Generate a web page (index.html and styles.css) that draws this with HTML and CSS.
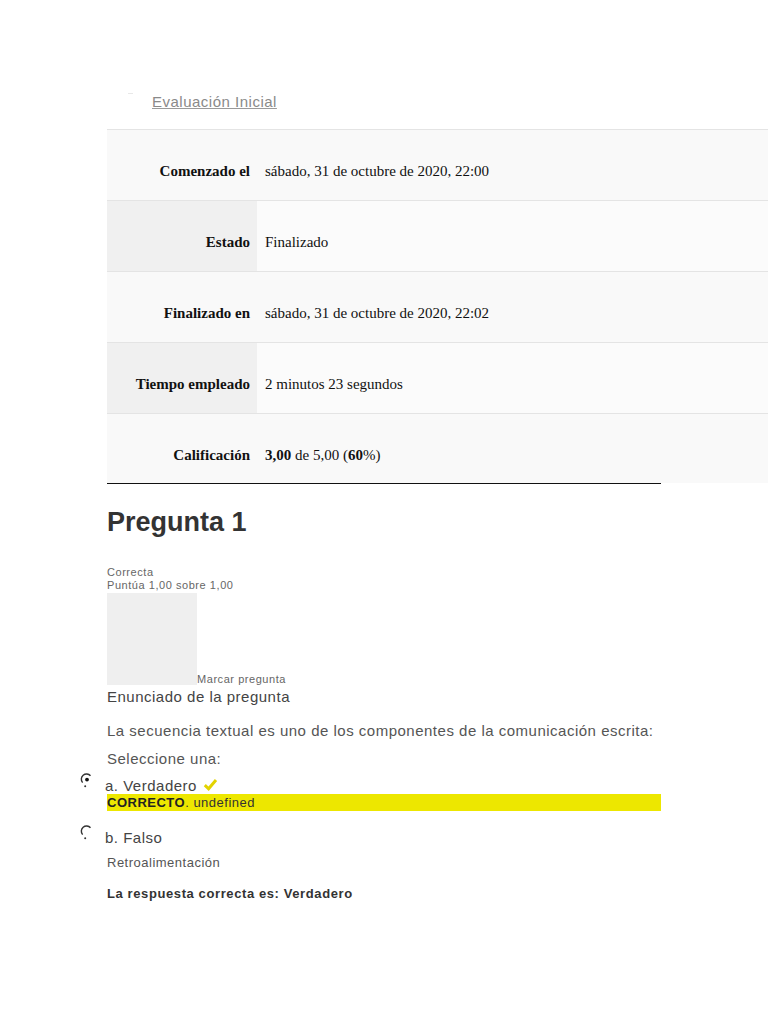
FILE: index.html
```html
<!DOCTYPE html>
<html lang="es">
<head>
<meta charset="utf-8">
<title>Evaluación Inicial</title>
<link rel="stylesheet" href="styles.css">
</head>
<body>
<div class="page">
  <div class="crumb"><span class="crumb-mark"></span><a class="crumb-link" href="#">Evaluación Inicial</a></div>

  <table class="summary">
    <tr class="odd"><th>Comenzado el</th><td>sábado, 31 de octubre de 2020, 22:00</td></tr>
    <tr class="even"><th>Estado</th><td>Finalizado</td></tr>
    <tr class="odd"><th>Finalizado en</th><td>sábado, 31 de octubre de 2020, 22:02</td></tr>
    <tr class="even"><th>Tiempo empleado</th><td>2 minutos 23 segundos</td></tr>
    <tr class="odd last"><th>Calificación</th><td><b>3,00</b> de 5,00 (<b>60</b>%)</td></tr>
  </table>
  <div class="rule"></div>

  <h2 class="qtitle">Pregunta 1</h2>
  <div class="qinfo">Correcta<br>Puntúa 1,00 sobre 1,00</div>
  <div class="flagrow"><div class="flagbox"></div><span class="flaglabel">Marcar pregunta</span></div>

  <div class="qhead">Enunciado de la pregunta</div>
  <div class="qtext">La secuencia textual es uno de los componentes de la comunicación escrita:</div>
  <div class="prompt">Seleccione una:</div>

  <div class="answer answer-a">
    <svg class="radio" width="14" height="16" viewBox="0 0 14 16" aria-hidden="true">
      <path d="M10.5 2.8 A5.2 5.2 0 1 0 2.6 9.6" fill="none" stroke="#333" stroke-width="1.4"/>
      <circle cx="5.2" cy="13.2" r="1" fill="#333"/>
      <circle cx="7" cy="6.6" r="1.9" fill="#111"/>
    </svg>
    <span class="alabel">a. Verdadero</span>
    <svg class="check" width="15" height="14" viewBox="0 0 15 14" aria-hidden="true">
      <path d="M1.8 7.2 L5.6 10.8 L13 2" fill="none" stroke="#e3d300" stroke-width="3"/>
    </svg>
  </div>
  <div class="feedback"><b>CORRECTO</b>. undefined</div>

  <div class="answer answer-b">
    <svg class="radio" width="14" height="16" viewBox="0 0 14 16" aria-hidden="true">
      <path d="M10.5 2.8 A5.2 5.2 0 1 0 2.6 9.6" fill="none" stroke="#333" stroke-width="1.4"/>
      <circle cx="5.2" cy="13.2" r="1" fill="#333"/>
    </svg>
    <span class="alabel">b. Falso</span>
  </div>

  <div class="retro">Retroalimentación</div>
  <div class="right-answer">La respuesta correcta es: Verdadero</div>
</div>
</body>
</html>
```

FILE: styles.css
```css
html, body {
  margin: 0;
  padding: 0;
  background: #fff;
  overflow-x: hidden;
}

.page {
  padding-left: 107px;
  font-family: "Liberation Sans", Arial, sans-serif;
  color: #444;
}

.crumb {
  margin-top: 92px;
  height: 20px;
  display: flex;
  align-items: center;
}

.crumb-mark {
  width: 5px;
  height: 1px;
  background: #e8e8e8;
  margin-left: 21px;
  margin-right: 19px;
  align-self: flex-start;
  margin-top: 1px;
}

.crumb-link {
  font-size: 15px;
  letter-spacing: 0.5px;
  color: #8a8a8a;
  text-decoration: underline;
  text-decoration-color: #9a9a9a;
  line-height: 20px;
}

.summary {
  margin-top: 17px;
  width: 661px;
  border-collapse: collapse;
  font-family: "Liberation Serif", "Times New Roman", serif;
  font-size: 15px;
  color: #111;
}

.summary tr {
  border-top: 1px solid #e4e4e4;
}

.summary th,
.summary td {
  padding: 33px 0 21px;
  line-height: 16px;
  vertical-align: top;
}

.summary th {
  width: 143px;
  text-align: right;
  padding-right: 7px;
  font-weight: bold;
}

.summary td {
  padding-left: 8px;
  text-align: left;
}

.summary tr.odd th,
.summary tr.odd td {
  background: #f9f9f9;
}

.summary tr.even th {
  background: #f0f0f0;
}

.summary tr.even td {
  background: #fbfbfb;
}

.summary tr.last th,
.summary tr.last td {
  padding-bottom: 20px;
}

.rule {
  width: 554px;
  height: 1px;
  background: #111;
}

.qtitle {
  margin: 22px 0 0;
  font-size: 27px;
  line-height: 32px;
  font-weight: bold;
  color: #333;
}

.qinfo {
  margin-top: 28px;
  font-size: 11px;
  line-height: 13px;
  letter-spacing: 0.55px;
  color: #666;
}

.flagrow {
  margin-top: 1px;
  display: flex;
  align-items: flex-end;
}

.flagbox {
  width: 90px;
  height: 92px;
  background: #efefef;
}

.flaglabel {
  font-size: 11px;
  line-height: 12px;
  letter-spacing: 0.55px;
  color: #666;
}

.qhead {
  margin-top: 3px;
  font-size: 15px;
  line-height: 18px;
  letter-spacing: 0.5px;
  color: #444;
}

.qtext {
  margin-top: 16px;
  font-size: 15px;
  line-height: 18px;
  letter-spacing: 0.5px;
  color: #555;
}

.prompt {
  margin-top: 10px;
  font-size: 15px;
  line-height: 18px;
  letter-spacing: 0.5px;
  color: #555;
}

.answer {
  display: flex;
  align-items: flex-start;
  margin-left: -27px;
  font-size: 15px;
  line-height: 18px;
  letter-spacing: 0.5px;
  color: #444;
}

.answer-a {
  margin-top: 9px;
}

.answer-b {
  margin-top: 18px;
}

.radio {
  margin-top: -4px;
  margin-right: 11px;
  flex: none;
}

.check {
  margin-left: 6px;
  margin-top: 1px;
}

.feedback {
  margin-top: -1px;
  width: 554px;
  height: 17px;
  background: #ede700;
  font-size: 13px;
  line-height: 17px;
  letter-spacing: 0.5px;
  color: #333;
}

.feedback b {
  color: #222;
}

.retro {
  margin-top: 8px;
  font-size: 13px;
  line-height: 16px;
  letter-spacing: 0.5px;
  color: #555;
}

.right-answer {
  margin-top: 15px;
  font-size: 13px;
  line-height: 16px;
  letter-spacing: 0.6px;
  font-weight: bold;
  color: #333;
}
```
